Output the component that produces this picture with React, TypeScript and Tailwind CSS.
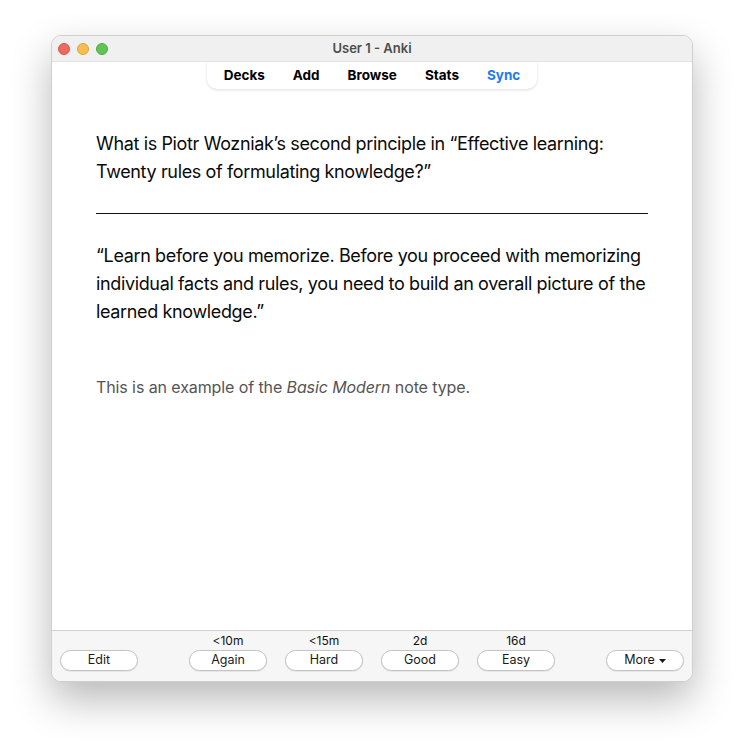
import React from 'react'

const sf = { fontFamily: 'Inter, "Noto Sans", sans-serif' }

function Pill({ label, width = 'w-[78px]' }: { label: React.ReactNode; width?: string }) {
  return (
    <button
      type="button"
      className={`${width} h-[21px] rounded-full border border-[#c4c4c4] bg-white text-[12.5px] text-[#1a1a1a] shadow-[0_0.5px_1px_rgba(0,0,0,0.12)] flex items-center justify-center`}
    >
      {label}
    </button>
  )
}

function Answer({ due, label }: { due: string; label: string }) {
  return (
    <div className="flex flex-col items-center">
      <span className="text-[12px] leading-[14px] text-[#111] mb-[2px]">{due}</span>
      <Pill label={label} />
    </div>
  )
}

export default function App() {
  const nav = ['Decks', 'Add', 'Browse', 'Stats']

  return (
    <div className="w-[744px] h-[750px] bg-white pt-[35px] pl-[51px]" style={sf}>
      <div className="w-[642px] h-[647px] rounded-[10px] border border-[#cfcfcf] overflow-hidden flex flex-col bg-white shadow-[0_18px_40px_rgba(0,0,0,0.28)]">
        {/* title bar */}
        <div className="h-[26px] shrink-0 bg-[#f0f0f0] border-b border-[#e2e2e2] flex items-center relative">
          <div className="flex gap-[7px] pl-[6px]">
            <span className="w-[12px] h-[12px] rounded-full bg-[#ed6a5e] border border-[#d5574b]" />
            <span className="w-[12px] h-[12px] rounded-full bg-[#f5bf4f] border border-[#d9a43c]" />
            <span className="w-[12px] h-[12px] rounded-full bg-[#61c554] border border-[#4fa842]" />
          </div>
          <div className="absolute inset-0 flex items-center justify-center text-[13px] font-semibold text-[#4d4d4d]">
            User 1 - Anki
          </div>
        </div>

        {/* toolbar */}
        <div className="flex justify-center shrink-0">
          <div className="w-[330px] h-[27px] rounded-b-[10px] bg-white shadow-[0_1px_3px_rgba(0,0,0,0.14)] flex items-center justify-center gap-[28px] text-[13.5px] font-bold">
            {nav.map(n => (
              <span key={n} className="text-black">{n}</span>
            ))}
            <span className="text-[#1e7bf0]">Sync</span>
          </div>
        </div>

        {/* card */}
        <div className="flex-1 px-[44px] pt-[41px] text-[18px] leading-[28px] tracking-[-0.36px] text-[#0a0a0a]">
          <p>What is Piotr Wozniak’s second principle in “Effective learning: Twenty rules of formulating knowledge?”</p>
          <hr className="mt-[27px] mb-[28px] border-0 border-t border-[#111]" />
          <p>“Learn before you memorize. Before you proceed with memorizing individual facts and rules, you need to build an overall picture of the learned knowledge.”</p>
          <p className="mt-[47px] text-[16px] tracking-[-0.1px] text-[#555]">
            This is an example of the <i>Basic Modern</i> note type.
          </p>
        </div>

        {/* bottom bar */}
        <div className="h-[51px] shrink-0 bg-[#f6f6f6] border-t border-[#d2d2d2] flex items-end pb-[10px] px-[8px]">
          <Pill label="Edit" />
          <div className="flex gap-[18px] ml-[51px]">
            <Answer due="<10m" label="Again" />
            <Answer due="<15m" label="Hard" />
            <Answer due="2d" label="Good" />
            <Answer due="16d" label="Easy" />
          </div>
          <div className="ml-auto">
            <Pill
              label={
                <span className="flex items-center gap-[4px]">
                  More
                  <svg width="7" height="4" viewBox="0 0 7 4"><path d="M0 0h7L3.5 4z" fill="#1a1a1a" /></svg>
                </span>
              }
            />
          </div>
        </div>
      </div>
    </div>
  )
}
